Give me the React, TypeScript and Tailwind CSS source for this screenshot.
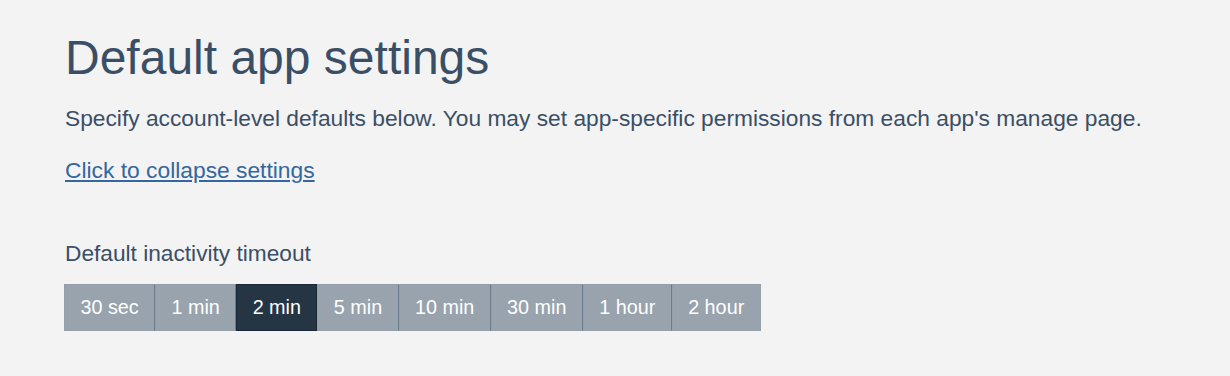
import React from 'react';

const options = ['30 sec', '1 min', '2 min', '5 min', '10 min', '30 min', '1 hour', '2 hour'];

const App: React.FC = () => {
  const active = '2 min';
  return (
    <div className="min-h-[376px] w-full bg-[#f3f3f3] text-[#3a4f66] font-['Liberation_Sans',Arial,sans-serif]">
      <div className="px-[65px] pt-[28px]">
        <h1 className="text-[48px] leading-[60px] font-normal">Default app settings</h1>
        <p className="mt-[16px] text-[22.75px] leading-[28px]">
          Specify account-level defaults below. You may set app-specific permissions from each app's manage page.
        </p>
        <a href="#" className="mt-[24px] inline-block text-[22.8px] leading-[28px] text-[#34679d] underline underline-offset-2">
          Click to collapse settings
        </a>
        <div className="mt-[54px] text-[22.7px] leading-[28px]">Default inactivity timeout</div>
        <div className="mt-[17px] -ml-px flex">
          {options.map((o) => (
            <button
              key={o}
              className={
                o === active
                  ? 'h-[47px] px-[15.4px] text-[19.8px] text-white bg-[#253544] border border-[#1b2835]'
                  : 'h-[47px] px-[15.4px] text-[19.8px] text-white bg-[#98a3ad] border border-[#959fa9] border-r-[#6c7c8b] last:border-r-[#959fa9]'
              }
            >
              {o}
            </button>
          ))}
        </div>
      </div>
    </div>
  );
};

export default App;
